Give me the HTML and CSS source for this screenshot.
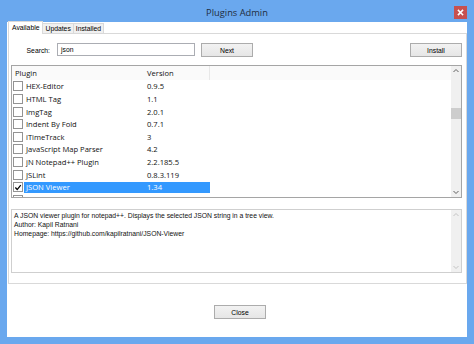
FILE: index.html
```html
<!DOCTYPE html>
<html lang="en">
<head>
    <meta charset="UTF-8">
    <title>Plugins Admin</title>
    <link rel="stylesheet" href="styles.css">
</head>
<body>
    <div class="window">
        <div class="titlebar">
            <span></span>
            <span class="title">Plugins Admin</span>
            <span class="close-x">
                <svg width="13" height="13" viewBox="0 0 13 13">
                    <path d="M4.5 4.5 L8.5 8.5 M8.5 4.5 L4.5 8.5" stroke="#fff" stroke-width="1.6" stroke-linecap="square"/>
                </svg>
            </span>
        </div>

        <div class="client">
            <!-- Tabs -->
            <div class="tabs">
                <div class="tab active">Available</div>
                <div class="tab">Updates</div>
                <div class="tab">Installed</div>
            </div>

            <div class="panel">
                <div class="search-row">
                    <span class="search-label">Search:</span>
                    <div class="search-input">json</div>
                    <button class="btn">Next</button>
                    <span class="spacer"></span>
                    <button class="btn">Install</button>
                </div>

                <!-- Plugin list -->
                <div class="list">
                    <div class="list-body">
                        <div class="list-header">
                            <span class="col-name">Plugin</span>
                            <span class="col-version">Version</span>
                            <span class="col-rest"></span>
                        </div>
                        <div id="rows"></div>
                    </div>
                    <div class="scrollbar">
                        <svg class="arrow" width="10" height="10" viewBox="0 0 10 10"><path d="M2.5 6 L5 3.5 L7.5 6" fill="none" stroke="#606060" stroke-width="1"/></svg>
                        <div class="track">
                            <div class="thumb"></div>
                        </div>
                        <svg class="arrow" width="10" height="10" viewBox="0 0 10 10"><path d="M2.5 4 L5 6.5 L7.5 4" fill="none" stroke="#606060" stroke-width="1"/></svg>
                    </div>
                </div>

                <!-- Description -->
                <div class="desc">
                    <div class="desc-text">
                        A JSON viewer plugin for notepad++. Displays the selected JSON string in a tree view.<br>
                        Author: Kapil Ratnani<br>
                        Homepage: https://github.com/kapilratnani/JSON-Viewer
                    </div>
                    <div class="scrollbar disabled">
                        <svg class="arrow" width="10" height="10" viewBox="0 0 10 10"><path d="M2.5 6 L5 3.5 L7.5 6" fill="none" stroke="#c4c4c4" stroke-width="1"/></svg>
                        <div class="track"></div>
                        <svg class="arrow" width="10" height="10" viewBox="0 0 10 10"><path d="M2.5 4 L5 6.5 L7.5 4" fill="none" stroke="#c4c4c4" stroke-width="1"/></svg>
                    </div>
                </div>
            </div>

            <div class="footer">
                <button class="btn close-btn">Close</button>
            </div>
        </div>
    </div>

    <script>
        // Available plugins
        const plugins = [
            { name: "HEX-Editor", version: "0.9.5" },
            { name: "HTML Tag", version: "1.1" },
            { name: "ImgTag", version: "2.0.1" },
            { name: "Indent By Fold", version: "0.7.1" },
            { name: "iTimeTrack", version: "3" },
            { name: "JavaScript Map Parser", version: "4.2" },
            { name: "jN Notepad++ Plugin", version: "2.2.185.5" },
            { name: "JSLint", version: "0.8.3.119" },
            { name: "JSON Viewer", version: "1.34", checked: true },
            { name: "JSTool", version: "1.1905.1" }
        ];

        const check = '<svg width="9" height="9" viewBox="0 0 9 9"><path d="M1.5 4.5 L3.6 6.8 L7.6 1.8" fill="none" stroke="#000" stroke-width="1.4"/></svg>';

        function renderRows() {
            const rows = document.getElementById("rows");
            plugins.forEach(p => {
                const row = document.createElement("div");
                row.className = "row" + (p.checked ? " selected" : "");
                row.innerHTML = `
                    <span class="checkbox">${p.checked ? check : ""}</span>
                    <span class="cell-name">${p.name}</span>
                    <span class="cell-version">${p.version}</span>
                `;
                rows.appendChild(row);
            });
        }

        renderRows();
    </script>
</body>
</html>
```

FILE: styles.css
```css
body {
    margin: 0;
    background-color: #6aa8ee;
    font-family: "Liberation Sans", Arial, sans-serif;
    color: #000;
}

.window {
    width: 474px;
    height: 344px;
    background-color: #6aa8ee;
    display: flex;
    flex-direction: column;
    box-sizing: border-box;
}

.titlebar {
    height: 22px;
    padding: 2px 7px 0 7px;
    box-sizing: border-box;
    display: grid;
    grid-template-columns: 1fr auto 1fr;
    align-items: center;
}

.title {
    font-family: "Open Sans", "Noto Sans", sans-serif;
    font-size: 9.3px;
    color: #1f2d3d;
}

.close-x {
    justify-self: end;
    width: 13px;
    height: 13px;
    background-color: #c7504f;
    display: flex;
}

.client {
    flex: 1;
    margin: 0 7px 7px 7px;
    background-color: #fff;
    display: flex;
    flex-direction: column;
}

/* Tabs */
.tabs {
    height: 11px;
    display: flex;
    align-items: flex-end;
    padding-left: 1px;
    position: relative;
    z-index: 1;
}

.tab {
    height: 9px;
    line-height: 9px;
    padding: 0 2px;
    font-size: 6.8px;
    color: #000;
    background-color: #f0f0f0;
    border: 1px solid #d9d9d9;
    border-bottom: none;
    margin-left: -1px;
}

.tab:first-child {
    margin-left: 0;
}

.tab.active {
    height: 12px;
    line-height: 11px;
    padding: 0 3px;
    background-color: #fff;
    margin-bottom: -1px;
    z-index: 2;
}

.panel {
    border: 1px solid #d9d9d9;
    margin-left: 1px;
    padding: 9px 4px 10px 2px;
    display: flex;
    flex-direction: column;
}

/* Search row */
.search-row {
    display: flex;
    align-items: center;
    height: 14px;
}

.search-label {
    width: 39px;
    text-align: right;
    font-size: 6.8px;
    margin-right: 7px;
}

.search-input {
    width: 133px;
    height: 11px;
    line-height: 11px;
    border: 1px solid #abadb3;
    padding-left: 3px;
    font-size: 6.8px;
    margin-bottom: 1px;
}

.btn {
    width: 52px;
    height: 14px;
    padding: 0;
    border: 1px solid #acacac;
    background: linear-gradient(#f2f2f2, #e6e6e6);
    font-family: "Liberation Sans", Arial, sans-serif;
    font-size: 6.8px;
    color: #000;
}

.search-row .btn:nth-of-type(1) {
    margin-left: 6px;
}

.spacer {
    flex: 1;
}

/* Plugin list */
.list {
    margin-top: 8px;
    height: 133px;
    box-sizing: border-box;
    border: 1px solid #a5a5a5;
    display: flex;
    overflow: hidden;
}

.list-body {
    flex: 1;
    overflow: hidden;
    font-family: "Open Sans", "Noto Sans", sans-serif;
    font-size: 7.6px;
    color: #111;
}

.list-header {
    height: 14px;
    display: flex;
    align-items: center;
    background-color: #fafafa;
}

.col-name {
    width: 132px;
    padding-left: 3px;
    box-sizing: border-box;
}

.col-version {
    width: 66px;
    padding-left: 3px;
    box-sizing: border-box;
    border-right: 1px solid #e8e8e8;
    height: 100%;
    display: flex;
    align-items: center;
}

.row {
    height: 12.63px;
    display: flex;
    align-items: center;
}

.checkbox {
    width: 10px;
    height: 10px;
    box-sizing: border-box;
    border: 1px solid #939393;
    background-color: #fff;
    margin-left: 1px;
    margin-right: 1px;
    display: flex;
    align-items: center;
    justify-content: center;
}

.cell-name {
    width: 120px;
    padding-left: 2px;
    box-sizing: border-box;
}

.cell-version {
    width: 66px;
    padding-left: 3px;
    box-sizing: border-box;
}

.row.selected .cell-name,
.row.selected .cell-version {
    background-color: #3399ff;
    color: #fff;
    height: 11px;
    line-height: 11px;
}

.scrollbar {
    width: 10px;
    background-color: #f0f0f0;
    display: flex;
    flex-direction: column;
}

.scrollbar .arrow {
    display: block;
    flex: none;
}

.scrollbar .track {
    flex: 1;
    padding-top: 32px;
}

.thumb {
    height: 11px;
    background-color: #cdcdcd;
}

/* Description */
.desc {
    margin-top: 11px;
    height: 64px;
    box-sizing: border-box;
    border: 1px solid #cfcfcf;
    display: flex;
}

.desc-text {
    flex: 1;
    padding: 1px 2px;
    font-size: 6.8px;
    line-height: 9px;
    color: #111;
}

/* Footer */
.footer {
    flex: 1;
    display: flex;
    justify-content: center;
    align-items: flex-start;
    padding-top: 21px;
}

.close-btn {
    margin-left: 6px;
}
```
